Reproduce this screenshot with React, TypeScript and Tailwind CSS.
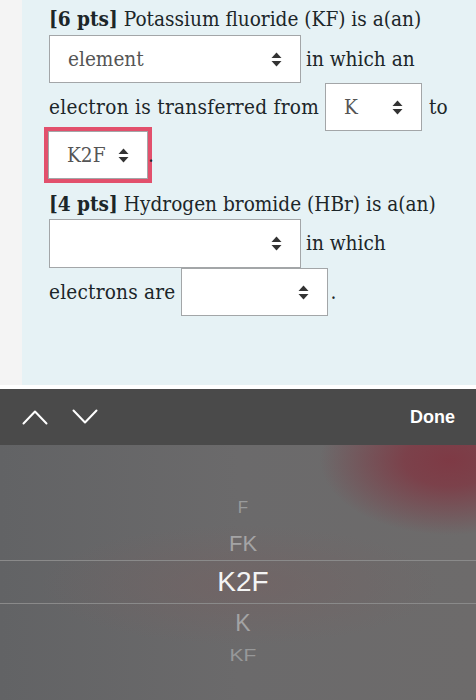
import React from 'react'

const serif = "font-['DejaVu_Serif',serif] font-stretch-semi-condensed"

function Arrows() {
    return (
        <svg width="11" height="15" viewBox="0 0 11 15" className="shrink-0">
            <path d="M5.5 0.5 L10.5 6 L0.5 6 Z" fill="#333" />
            <path d="M5.5 14.5 L10.5 9 L0.5 9 Z" fill="#333" />
        </svg>
    )
}

function Select({ value, width, focused }: { value?: string; width: string; focused?: boolean }) {
    return (
        <div
            className={`flex h-[48px] items-center justify-between border border-[#a3a6a8] bg-white pl-[18px] pr-[18px] text-[#555] ${width} ${
                focused ? 'outline-4 outline-[#e2506c]' : ''
            }`}
        >
            <span>{value ?? ''}</span>
            <Arrows />
        </div>
    )
}

function Chevron({ up }: { up?: boolean }) {
    return (
        <svg width="26" height="16" viewBox="0 0 26 16" fill="none">
            <path
                d={up ? 'M1.5 14.5 L13 2.5 L24.5 14.5' : 'M1.5 1.5 L13 13.5 L24.5 1.5'}
                stroke="#fff"
                strokeWidth="2"
                strokeLinecap="round"
                strokeLinejoin="round"
            />
        </svg>
    )
}

export default function App() {
    return (
        <div className="flex h-[700px] w-[476px] flex-col overflow-hidden bg-white">
            {/* question panel */}
            <div className="flex h-[385px] shrink-0">
                <div className="w-[22px] shrink-0 bg-[#f4f4f4]" />
                <div className={`flex-1 bg-[#e6f2f5] pl-[27px] pt-[4px] text-[20.6px] text-[#1c2629] ${serif}`}>
                    <div className="flex h-[31px] items-center">
                        <span className="font-bold">[6 pts]</span>
                        <span className="ml-[6px]">Potassium fluoride (KF) is a(an)</span>
                    </div>
                    <div className="flex h-[48px] items-center gap-[5px]">
                        <Select value="element" width="w-[252px]" />
                        <span>in which an</span>
                    </div>
                    <div className="flex h-[48px] items-center">
                        <span className="tracking-[0.28px]">electron is transferred from</span>
                        <div className="ml-[6px]">
                            <Select value="K" width="w-[97px]" />
                        </div>
                        <span className="ml-[7px]">to</span>
                    </div>
                    <div className="flex h-[48px] items-center">
                        <div className="-ml-[1px]">
                            <Select value="K2F" width="w-[100px]" focused />
                        </div>
                        <span>.</span>
                    </div>

                    <div className="mt-[10px] flex h-[30px] items-center">
                        <span className="font-bold">[4 pts]</span>
                        <span className="ml-[6px]">Hydrogen bromide (HBr) is a(an)</span>
                    </div>
                    <div className="flex h-[49px] items-center gap-[5px]">
                        <Select width="w-[252px] h-[49px]" />
                        <span>in which</span>
                    </div>
                    <div className="flex h-[48px] items-center">
                        <span className="tracking-[0.2px]">electrons are</span>
                        <div className="ml-[6px]">
                            <Select width="w-[147px]" />
                        </div>
                        <span className="ml-[2px]">.</span>
                    </div>
                </div>
            </div>

            <div className="h-[4px] shrink-0 bg-white" />

            {/* keyboard accessory bar */}
            <div className="flex h-[56px] shrink-0 items-center bg-[#4a4a4a] pl-[22px] pr-[21px] font-['Liberation_Sans',sans-serif]">
                <Chevron up />
                <div className="ml-[24px]">
                    <Chevron />
                </div>
                <span className="ml-auto text-[18px] font-bold text-white">Done</span>
            </div>

            {/* picker wheel */}
            <div className="relative flex-1 bg-[radial-gradient(ellipse_130px_75px_at_450px_15px,#7e3a45_0%,rgba(126,58,69,0.85)_35%,rgba(110,100,100,0)_100%),radial-gradient(ellipse_200px_60px_at_240px_140px,rgba(120,95,95,0.45),rgba(110,100,100,0)),linear-gradient(90deg,#626365_0%,#6b6a6b_50%,#6d6b6b_100%)] font-['Liberation_Sans',sans-serif]">
                <div className="flex flex-col items-center pl-[10px] pt-[45px]">
                    <div className="flex h-[36px] items-center text-[17px] text-[#999a9b]">F</div>
                    <div className="flex h-[34px] items-center text-[22px] text-[#a4a4a5]">FK</div>
                    <div className="-ml-[10px] flex h-[44px] w-[476px] items-center justify-center border-y border-[#8a8a8a] pl-[10px] text-[28px] text-[#f4f4f4]">
                        K2F
                    </div>
                    <div className="flex h-[38px] items-center text-[23px] text-[#a3a3a4]">K</div>
                    <div className="flex h-[28px] scale-y-75 items-center text-[21px] text-[#979899]">KF</div>
                </div>
            </div>
        </div>
    )
}
